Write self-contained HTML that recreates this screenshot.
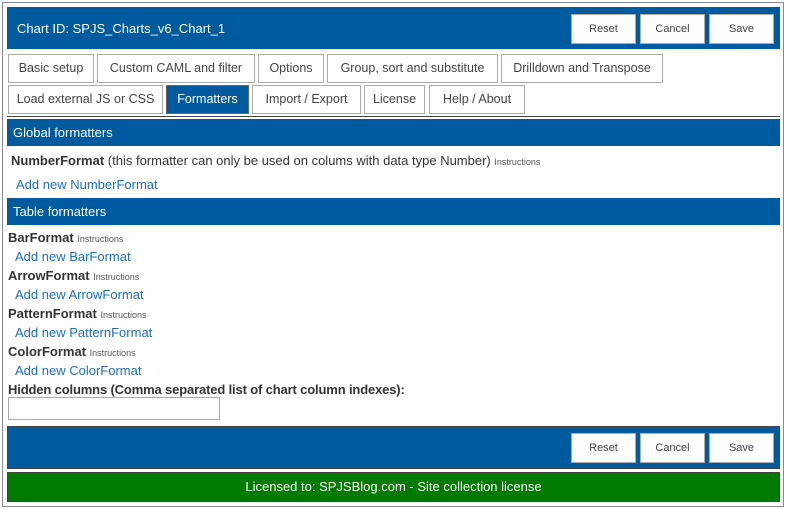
<!DOCTYPE html>
<html><head><meta charset="utf-8"><style>
*{box-sizing:border-box;margin:0;padding:0}
body{width:787px;height:509px;background:#fff;position:relative;font-family:"Liberation Sans",sans-serif;font-size:13px;color:#333;overflow:hidden}
.a{position:absolute}
.blue{background:#005a9e}
.btn{position:absolute;background:#fdfdfd;border:1px solid #ababab;font-size:11px;color:#444;text-align:center;line-height:28px}
.tab{position:absolute;border:1px solid #ababab;background:#fff;color:#444;font-size:12.5px;text-align:center;line-height:27px;height:29px;white-space:nowrap}
.bar{position:absolute;left:7px;width:773px;color:#fff;font-size:13px;padding-left:6px}
.b{font-weight:bold;color:#333}
.ins{font-size:9px;color:#555;font-weight:normal}
.lk{color:#1a6fc2}
</style></head><body>
<div class="a" style="left:2px;top:2px;width:782px;height:505px;border:1px solid #8a8a8a"></div>
<div class="a blue" style="left:7px;top:7px;width:773px;height:42px;color:#fff;line-height:44px;padding-left:10px;font-size:13px">Chart ID: SPJS_Charts_v6_Chart_1</div>
<div class="btn" style="left:571px;top:14px;width:65px;height:30px">Reset</div>
<div class="btn" style="left:640px;top:14px;width:65px;height:30px">Cancel</div>
<div class="btn" style="left:709px;top:14px;width:65px;height:30px">Save</div>

<div class="tab" style="left:8px;top:54px;width:86px">Basic setup</div>
<div class="tab" style="left:97px;top:54px;width:158px">Custom CAML and filter</div>
<div class="tab" style="left:258px;top:54px;width:66px">Options</div>
<div class="tab" style="left:327px;top:54px;width:171px">Group, sort and substitute</div>
<div class="tab" style="left:501px;top:54px;width:162px">Drilldown and Transpose</div>
<div class="tab" style="left:8px;top:85px;width:155px">Load external JS or CSS</div>
<div class="tab" style="left:166px;top:85px;width:83px;background:#005a9e;color:#fff;border-color:#666">Formatters</div>
<div class="tab" style="left:252px;top:85px;width:109px">Import / Export</div>
<div class="tab" style="left:364px;top:85px;width:61px">License</div>
<div class="tab" style="left:429px;top:85px;width:96px">Help / About</div>
<div class="a" style="left:7px;top:116px;width:773px;height:1px;background:#444"></div>

<div class="bar blue" style="top:119px;height:27px;line-height:27px">Global formatters</div>
<div class="a" style="left:11px;top:153px"><span class="b">NumberFormat</span> (this formatter can only be used on colums with data type Number) <span class="ins">Instructions</span></div>
<div class="a lk" style="left:16px;top:177px">Add new NumberFormat</div>
<div class="bar blue" style="top:198px;height:27px;line-height:27px">Table formatters</div>
<div class="a" style="left:8px;top:230px"><span class="b">BarFormat</span> <span class="ins">Instructions</span></div>
<div class="a lk" style="left:15px;top:249px">Add new BarFormat</div>
<div class="a" style="left:8px;top:268px"><span class="b">ArrowFormat</span> <span class="ins">Instructions</span></div>
<div class="a lk" style="left:15px;top:287px">Add new ArrowFormat</div>
<div class="a" style="left:8px;top:306px"><span class="b">PatternFormat</span> <span class="ins">Instructions</span></div>
<div class="a lk" style="left:15px;top:325px">Add new PatternFormat</div>
<div class="a" style="left:8px;top:344px"><span class="b">ColorFormat</span> <span class="ins">Instructions</span></div>
<div class="a lk" style="left:15px;top:363px">Add new ColorFormat</div>
<div class="a b" style="left:8px;top:382px;letter-spacing:-0.15px">Hidden columns (Comma separated list of chart column indexes):</div>
<div class="a" style="left:8px;top:397px;width:212px;height:23px;border:1px solid #aaa"></div>

<div class="a blue" style="left:7px;top:426px;width:773px;height:43px;border:1px solid #444"></div>
<div class="btn" style="left:571px;top:433px;width:65px;height:30px">Reset</div>
<div class="btn" style="left:640px;top:433px;width:65px;height:30px">Cancel</div>
<div class="btn" style="left:709px;top:433px;width:65px;height:30px">Save</div>
<div class="a" style="left:7px;top:472px;width:773px;height:30px;background:#007a00;border:1px solid #444;color:#fff;text-align:center;line-height:28px">Licensed to: SPJSBlog.com - Site collection license</div>
</body></html>
